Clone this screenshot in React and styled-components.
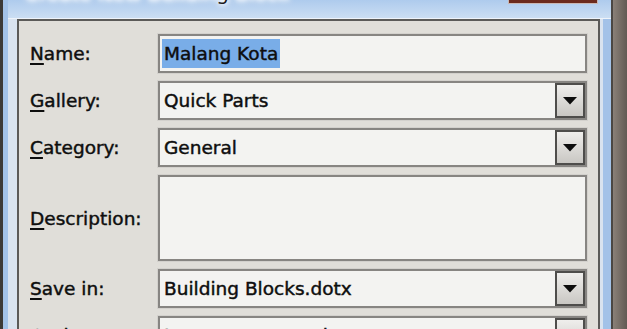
import React from 'react';
import styled, { createGlobalStyle } from 'styled-components';

const GlobalStyle = createGlobalStyle`
  html, body {
    margin: 0;
    padding: 0;
  }
  body {
    width: 627px;
    height: 329px;
    overflow: hidden;
    background: #3f3b38;
    font-family: 'DejaVu Sans', Verdana, sans-serif;
  }
`;

const Screen = styled.div`
  display: flex;
  width: 627px;
  height: 329px;
  overflow: hidden;
  background: linear-gradient(90deg, #3c3936 0, #3c3936 3px, #8a8078 613px, #625a54 627px);
`;

const Window = styled.div`
  margin-left: 3px;
  width: 603px;
  border-left: 5px solid #a3c2e8;
  border-right: 2px solid #4b4744;
  display: flex;
  flex-direction: column;
  background: #d9e3ef;
`;

const TitleBar = styled.div`
  height: 18px;
  flex-shrink: 0;
  display: flex;
  align-items: flex-start;
  overflow: hidden;
  padding-left: 17px;
  background: linear-gradient(#aecbed, #cbdef3);
  border-bottom: 1px solid #eef3fa;
`;

const Title = styled.span`
  margin-top: -19px;
  font-size: 20px;
  line-height: 24px;
  color: #1b1b1b;
  white-space: nowrap;
  text-shadow: 0 0 4px #fff, 0 0 6px #fff, 0 0 8px #fff;
`;

const CloseButton = styled.div`
  margin-left: auto;
  margin-right: 13px;
  width: 88px;
  height: 3px;
  background: #6c2a1c;
  border: 1px solid #c9b7b3;
  border-top: none;
`;

const Body = styled.div`
  flex: 1;
  display: flex;
  padding: 0 3px 0 9px;
  border-right: 8px solid #a3c2e8;
`;

const Panel = styled.div`
  flex: 1;
  display: flex;
  flex-direction: column;
  gap: 8px;
  padding: 13px 11px 0 11px;
  border: 2px solid #5b5a58;
  border-bottom: none;
  background: #e0ded9;
`;

const Row = styled.div`
  flex-shrink: 0;
  display: grid;
  grid-template-columns: 128px 1fr;
  align-items: center;
  height: ${p => (p.$tall ? '86px' : '39px')};
`;

const Label = styled.label`
  font-size: 18.5px;
  color: #0e0e0e;
  white-space: nowrap;
  -webkit-text-stroke: 0.45px #0e0e0e;

  u {
    text-decoration-thickness: 1.5px;
    text-underline-offset: 3px;
  }
`;

const Field = styled.div`
  height: 100%;
  box-sizing: border-box;
  display: flex;
  align-items: center;
  padding-left: ${p => p.$pad}px;
  border: 2px solid #878582;
  box-shadow: 0 0 0 1px #d3d1cd;
  background: #f3f3f1;
  font-size: 18.5px;
  color: #0e0e0e;
  -webkit-text-stroke: 0.45px #0e0e0e;
  white-space: nowrap;
  overflow: hidden;
`;

const Selected = styled.span`
  padding: 4px 2px;
  background: #79ade8;
`;

const DropButton = styled.div`
  margin-left: auto;
  width: 30px;
  height: 100%;
  box-sizing: border-box;
  display: flex;
  align-items: center;
  justify-content: center;
  border: 2px solid #4e4d4b;
  background: linear-gradient(#efeeec, #c9c7c3);
`;

function Arrow() {
  return (
    <svg width="14" height="8" viewBox="0 0 14 8">
      <polygon points="0,0 14,0 7,7.5" fill="#0d0d0d" />
    </svg>
  );
}

function Combo({ value }) {
  return (
    <Field $pad={4}>
      {value}
      <DropButton>
        <Arrow />
      </DropButton>
    </Field>
  );
}

export default function App() {
  return (
    <>
      <GlobalStyle />
      <Screen>
        <Window>
          <TitleBar>
            <Title>Create New Building Block</Title>
            <CloseButton />
          </TitleBar>
          <Body>
            <Panel>
              <Row>
                <Label><u>N</u>ame:</Label>
                <Field $pad={2}>
                  <Selected>Malang Kota</Selected>
                </Field>
              </Row>
              <Row>
                <Label><u>G</u>allery:</Label>
                <Combo value="Quick Parts" />
              </Row>
              <Row>
                <Label><u>C</u>ategory:</Label>
                <Combo value="General" />
              </Row>
              <Row $tall>
                <Label><u>D</u>escription:</Label>
                <Field $pad={4} />
              </Row>
              <Row>
                <Label><u>S</u>ave in:</Label>
                <Combo value="Building Blocks.dotx" />
              </Row>
              <Row>
                <Label><u>O</u>ptions:</Label>
                <Combo value="Insert content only" />
              </Row>
            </Panel>
          </Body>
        </Window>
      </Screen>
    </>
  );
}
